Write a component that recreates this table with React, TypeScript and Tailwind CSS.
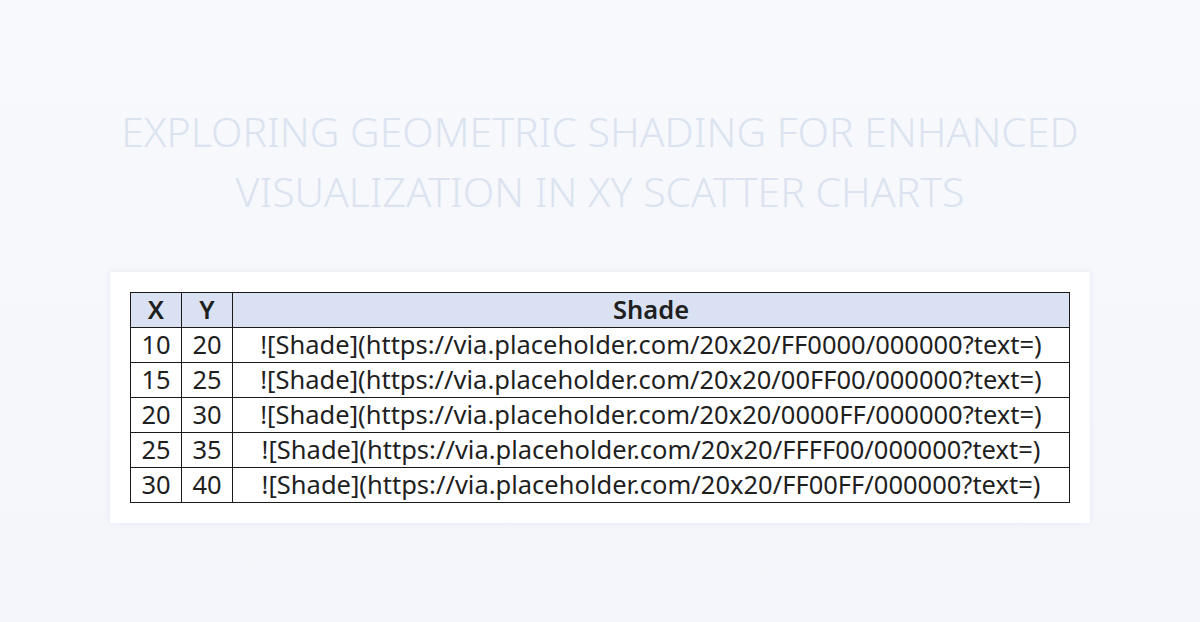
const rows = [
  { x: 10, y: 20, color: "FF0000" },
  { x: 15, y: 25, color: "00FF00" },
  { x: 20, y: 30, color: "0000FF" },
  { x: 25, y: 35, color: "FFFF00" },
  { x: 30, y: 40, color: "FF00FF" },
];

const App = () => {
  return (
    <div
      className="w-[1200px] h-[622px] overflow-hidden bg-gradient-to-b from-[#f7f9fc] to-[#f4f6fb] flex flex-col items-center"
      style={{ fontFamily: '"Noto Sans", "Open Sans", sans-serif' }}
    >
      <h1 className="mt-[101px] text-center text-[41px] leading-[60px] font-light uppercase text-[#dce3f0]">
        Exploring Geometric Shading for Enhanced
        <br />
        Visualization in XY Scatter Charts
      </h1>

      <div className="mt-[51px] w-[980px] bg-white px-5 py-5 shadow-[0_0_6px_rgba(200,210,230,0.35)]">
        <table className="w-full border-collapse text-[25.5px] text-[#1f1f1f]">
          <thead>
            <tr className="bg-[#d9e1f2] h-[35px]">
              <th className="w-[51px] border-[1.5px] border-[#1a1a1a] font-semibold leading-none">X</th>
              <th className="w-[51px] border-[1.5px] border-[#1a1a1a] font-semibold leading-none">Y</th>
              <th className="border-[1.5px] border-[#1a1a1a] font-semibold leading-none">Shade</th>
            </tr>
          </thead>
          <tbody>
            {rows.map((r) => (
              <tr key={r.x} className="h-[35px]">
                <td className="border-[1.5px] border-[#1a1a1a] text-center leading-none">{r.x}</td>
                <td className="border-[1.5px] border-[#1a1a1a] text-center leading-none">{r.y}</td>
                <td className="border-[1.5px] border-[#1a1a1a] text-center leading-none">
                  ![Shade](https://via.placeholder.com/20x20/{r.color}/000000?text=)
                </td>
              </tr>
            ))}
          </tbody>
        </table>
      </div>
    </div>
  );
};

export default App;
